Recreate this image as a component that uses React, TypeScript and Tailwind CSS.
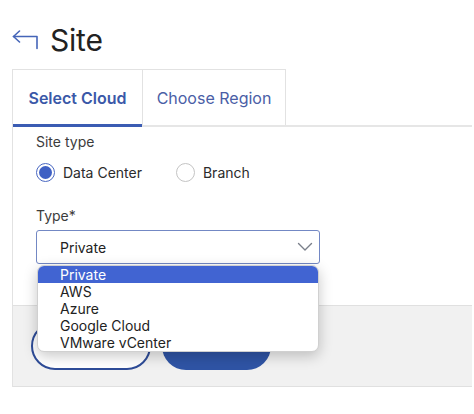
import React from 'react';

const OPTIONS = ['Private', 'AWS', 'Azure', 'Google Cloud', 'VMware vCenter'];

function BackArrow() {
  return (
    <svg width="27" height="20" viewBox="0 0 27 20" fill="none" stroke="#4565b8" strokeWidth="1.6" strokeLinecap="round" strokeLinejoin="round">
      <path d="M1.5 6.5H25V18.5" />
      <path d="M7.5 1L1.5 6.5L7.5 12" />
    </svg>
  );
}

function Radio({ checked, label }: { checked?: boolean; label: string }) {
  return (
    <div className="flex items-center gap-[8px]">
      <span
        className={`w-[19px] h-[19px] rounded-full flex items-center justify-center border ${
          checked ? 'border-[#4a68c2] border-[1.5px]' : 'border-[#c4c4c4]'
        }`}
      >
        {checked && <span className="w-[13px] h-[13px] rounded-full bg-[#3f60c4]" />}
      </span>
      <span className="text-[14px] text-[#2b2b2b]">{label}</span>
    </div>
  );
}

export default function App() {
  return (
    <div className="w-[474px] h-[414px] bg-white overflow-hidden font-['Inter',sans-serif]">
      {/* Header */}
      <div className="h-[69px] pt-[10px] pl-3 flex items-center gap-[11px]">
        <BackArrow />
        <h1 className="text-[30px] leading-none text-[#222] tracking-[-0.2px]">Site</h1>
      </div>

      <div className="ml-3 mr-[2px] border-l border-[#e2e2e2]">
        {/* Tabs */}
        <div className="flex h-[58px] border-b-2 border-[#e6e6e6]">
          <div className="relative w-[129px] border-t border-[#e2e2e2] flex items-center justify-center">
            <span className="text-[16px] font-semibold text-[#3a58a8]">Select Cloud</span>
            <span className="absolute left-0 right-0 -bottom-[2px] h-[3px] bg-[#3b5cb3]" />
          </div>
          <div className="w-[144px] border-t border-l border-r border-[#e2e2e2] flex items-center justify-center">
            <span className="text-[16px] text-[#4a5ea6]">Choose Region</span>
          </div>
        </div>

        {/* Body */}
        <div className="pl-[23px] pt-[5px]">
          <div className="text-[14px] leading-5 text-[#3c3c3c]">Site type</div>
          <div className="mt-[8px] h-6 flex items-center gap-[34px]">
            <Radio checked label="Data Center" />
            <Radio label="Branch" />
          </div>
          <div className="mt-[22px] text-[14px] leading-5 text-[#3c3c3c]">Type*</div>
          <div className="relative mt-1 w-[284px]">
            <div className="h-[34px] rounded-[3px] border border-[#7388c4] flex items-center justify-between pl-[23px] pr-[6px]">
              <span className="text-[14px] text-[#222]">Private</span>
              <svg width="16" height="10" viewBox="0 0 16 10" fill="none" stroke="#7a7f8a" strokeWidth="1.4" strokeLinecap="round" strokeLinejoin="round">
                <path d="M1.5 1.5L8 8L14.5 1.5" />
              </svg>
            </div>
            {/* Dropdown list */}
            <div className="absolute z-10 left-[1px] top-[35px] w-[282px] bg-white rounded-[7px] overflow-hidden shadow-[0_4px_14px_rgba(0,0,0,0.22)] border border-[#d0d0d0]">
              {OPTIONS.map((o, i) => (
                <div
                  key={o}
                  className={`h-[17px] leading-[17px] pl-[22px] text-[14px] ${
                    i === 0 ? 'bg-[#4164d2] text-white' : 'text-[#222]'
                  }`}
                >
                  {o}
                </div>
              ))}
            </div>
          </div>
        </div>

        {/* Footer */}
        <div className="mt-[41px] h-[82px] bg-[#f1f1f1] border-t border-b border-[#e0e0e0] flex items-center pl-[18px] gap-[11px]">
          <button className="w-[120px] h-[48px] rounded-full border-2 border-[#2e4c98] bg-white text-[15px] font-semibold text-[#2e4c98]">
            Cancel
          </button>
          <button className="w-[109px] h-[48px] rounded-full bg-[#2f54a5] text-[15px] font-semibold text-white">
            Next
          </button>
        </div>
      </div>
    </div>
  );
}
